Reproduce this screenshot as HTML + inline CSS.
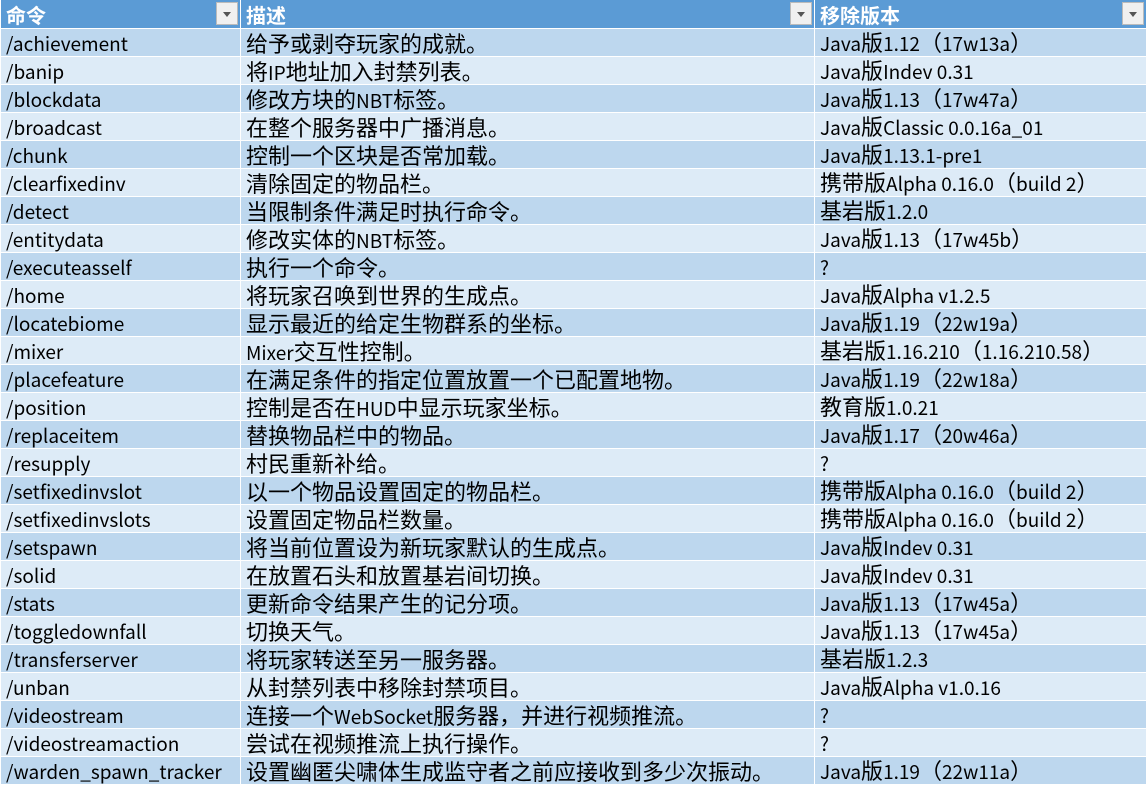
<!DOCTYPE html>
<html><head><meta charset="utf-8"><style>
body{margin:0;width:1146px;height:785px;overflow:hidden;background:#fff;font-family:"Noto Sans CJK SC","Liberation Sans",sans-serif;}
table{border-collapse:collapse;table-layout:fixed;width:1146px;}
td{padding:2px 0 0 5px;height:25px;border:1px solid #fff;font-size:19px;color:#000;white-space:nowrap;overflow:hidden;line-height:25px;}
td.d{font-size:22px;line-height:25px;}
td.d span{font-size:19px;line-height:1;}
b{font-weight:normal;font-size:22px;line-height:1;}
tr:nth-child(even) td{background:#BDD7EE;}
tr:nth-child(odd) td{background:#DDEBF7;}
tr.h td{background:#5B9BD5;color:#fff;font-weight:bold;font-size:20px;height:26px;position:relative;border-top:0;padding-top:2px;line-height:26px;}
.dd{position:absolute;right:2px;top:2px;width:22px;height:23px;background:#f0f0f0;border:1px solid #bbb;box-sizing:border-box;}
.dd:after{content:"";position:absolute;left:6px;top:9px;border-left:4px solid transparent;border-right:4px solid transparent;border-top:5px solid #555;}
</style></head><body>
<table>
<colgroup><col style="width:240px"><col style="width:574px"><col style="width:332px"></colgroup>
<tr class="h"><td>命令<span class="dd"></span></td><td>描述<span class="dd"></span></td><td>移除版本<span class="dd"></span></td></tr>
<tr><td>/achievement</td><td class="d">给予或剥夺玩家的成就。</td><td>Java<b>版</b>1.12<b>（</b>17w13a<b>）</b></td></tr>
<tr><td>/banip</td><td class="d">将<span>IP</span>地址加入封禁列表。</td><td>Java<b>版</b>Indev 0.31</td></tr>
<tr><td>/blockdata</td><td class="d">修改方块的<span>NBT</span>标签。</td><td>Java<b>版</b>1.13<b>（</b>17w47a<b>）</b></td></tr>
<tr><td>/broadcast</td><td class="d">在整个服务器中广播消息。</td><td>Java<b>版</b>Classic 0.0.16a_01</td></tr>
<tr><td>/chunk</td><td class="d">控制一个区块是否常加载。</td><td>Java<b>版</b>1.13.1-pre1</td></tr>
<tr><td>/clearfixedinv</td><td class="d">清除固定的物品栏。</td><td><b>携带版</b>Alpha 0.16.0<b>（</b>build 2<b>）</b></td></tr>
<tr><td>/detect</td><td class="d">当限制条件满足时执行命令。</td><td><b>基岩版</b>1.2.0</td></tr>
<tr><td>/entitydata</td><td class="d">修改实体的<span>NBT</span>标签。</td><td>Java<b>版</b>1.13<b>（</b>17w45b<b>）</b></td></tr>
<tr><td>/executeasself</td><td class="d">执行一个命令。</td><td>?</td></tr>
<tr><td>/home</td><td class="d">将玩家召唤到世界的生成点。</td><td>Java<b>版</b>Alpha v1.2.5</td></tr>
<tr><td>/locatebiome</td><td class="d">显示最近的给定生物群系的坐标。</td><td>Java<b>版</b>1.19<b>（</b>22w19a<b>）</b></td></tr>
<tr><td>/mixer</td><td class="d"><span>Mixer</span>交互性控制。</td><td><b>基岩版</b>1.16.210<b>（</b>1.16.210.58<b>）</b></td></tr>
<tr><td>/placefeature</td><td class="d">在满足条件的指定位置放置一个已配置地物。</td><td>Java<b>版</b>1.19<b>（</b>22w18a<b>）</b></td></tr>
<tr><td>/position</td><td class="d">控制是否在<span>HUD</span>中显示玩家坐标。</td><td><b>教育版</b>1.0.21</td></tr>
<tr><td>/replaceitem</td><td class="d">替换物品栏中的物品。</td><td>Java<b>版</b>1.17<b>（</b>20w46a<b>）</b></td></tr>
<tr><td>/resupply</td><td class="d">村民重新补给。</td><td>?</td></tr>
<tr><td>/setfixedinvslot</td><td class="d">以一个物品设置固定的物品栏。</td><td><b>携带版</b>Alpha 0.16.0<b>（</b>build 2<b>）</b></td></tr>
<tr><td>/setfixedinvslots</td><td class="d">设置固定物品栏数量。</td><td><b>携带版</b>Alpha 0.16.0<b>（</b>build 2<b>）</b></td></tr>
<tr><td>/setspawn</td><td class="d">将当前位置设为新玩家默认的生成点。</td><td>Java<b>版</b>Indev 0.31</td></tr>
<tr><td>/solid</td><td class="d">在放置石头和放置基岩间切换。</td><td>Java<b>版</b>Indev 0.31</td></tr>
<tr><td>/stats</td><td class="d">更新命令结果产生的记分项。</td><td>Java<b>版</b>1.13<b>（</b>17w45a<b>）</b></td></tr>
<tr><td>/toggledownfall</td><td class="d">切换天气。</td><td>Java<b>版</b>1.13<b>（</b>17w45a<b>）</b></td></tr>
<tr><td>/transferserver</td><td class="d">将玩家转送至另一服务器。</td><td><b>基岩版</b>1.2.3</td></tr>
<tr><td>/unban</td><td class="d">从封禁列表中移除封禁项目。</td><td>Java<b>版</b>Alpha v1.0.16</td></tr>
<tr><td>/videostream</td><td class="d">连接一个<span>WebSocket</span>服务器，并进行视频推流。</td><td>?</td></tr>
<tr><td>/videostreamaction</td><td class="d">尝试在视频推流上执行操作。</td><td>?</td></tr>
<tr><td>/warden_spawn_tracker</td><td class="d">设置幽匿尖啸体生成监守者之前应接收到多少次振动。</td><td>Java<b>版</b>1.19<b>（</b>22w11a<b>）</b></td></tr>
</table>
</body></html>
